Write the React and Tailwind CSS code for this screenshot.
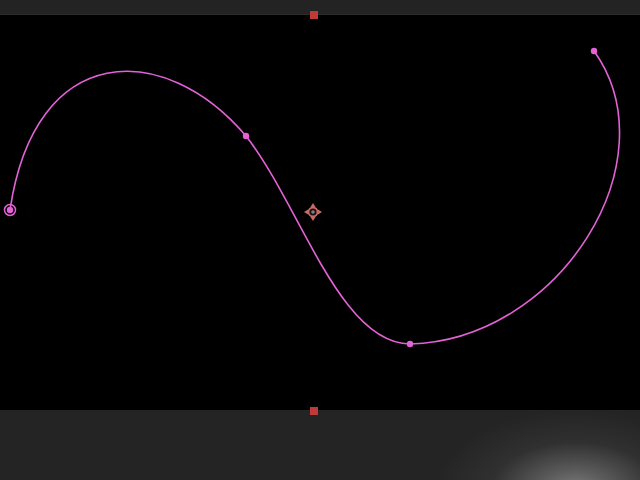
import React from 'react';

// Bezier path editor: canvas between two dark bars, with pink spline, anchors and pivot.
const PINK = '#e462d6';

function Anchor({ x, y }) {
  return <circle cx={x} cy={y} r="3.2" fill={PINK} />;
}

function Pivot({ x, y }) {
  const c = '#c96a66';
  return (
    <g>
      <polygon points={`${x - 9},${y} ${x - 5},${y - 2.5} ${x - 5},${y + 2.5}`} fill={c} />
      <polygon points={`${x + 9},${y} ${x + 5},${y - 2.5} ${x + 5},${y + 2.5}`} fill={c} />
      <polygon points={`${x},${y - 9} ${x - 2.5},${y - 5} ${x + 2.5},${y - 5}`} fill={c} />
      <polygon points={`${x},${y + 9} ${x - 2.5},${y + 5} ${x + 2.5},${y + 5}`} fill={c} />
      <circle cx={x} cy={y} r="4.5" fill="#1a1212" stroke={c} strokeWidth="1.8" />
      <circle cx={x} cy={y} r="1.8" fill="#8a7a7a" />
    </g>
  );
}

export default function App() {
  return (
    <div className="w-[640px] h-[480px] flex flex-col bg-black overflow-hidden">
      {/* top strip */}
      <div className="relative h-[15px] bg-[#232323] border-b border-[#2c2c2c]">
        <div className="absolute left-[310px] top-[11px] w-[8px] h-[8px] bg-[#c0393b] z-10" />
      </div>

      {/* canvas */}
      <div className="relative h-[395px] bg-black">
        <svg width="640" height="395" viewBox="0 15 640 395" className="block">
          <path
            d="M10 210 C35 40 165 40 246 136 C300 205 340 344 410 344 C560 340 672 160 594 51"
            fill="none"
            stroke={PINK}
            strokeWidth="1.6"
          />
          <circle cx="10" cy="210" r="5.5" fill="none" stroke={PINK} strokeWidth="1.5" />
          <Anchor x={10} y={210} />
          <Anchor x={246} y={136} />
          <Anchor x={410} y={344} />
          <Anchor x={594} y={51} />
          <Pivot x={313} y={212} />
        </svg>
        <div className="absolute left-[310px] bottom-[-5px] w-[8px] h-[8px] bg-[#c0393b] z-10" />
      </div>

      {/* bottom panel with soft light */}
      <div className="relative flex-1 bg-[#242424] overflow-hidden">
        <div className="absolute left-[420px] top-0 w-[310px] h-[160px] bg-[radial-gradient(ellipse_140px_80px_at_50%_50%,rgba(125,125,125,1)_0%,rgba(100,100,100,0.85)_25%,rgba(60,60,60,0.5)_60%,rgba(36,36,36,0)_100%)]" />
      </div>
    </div>
  );
}
